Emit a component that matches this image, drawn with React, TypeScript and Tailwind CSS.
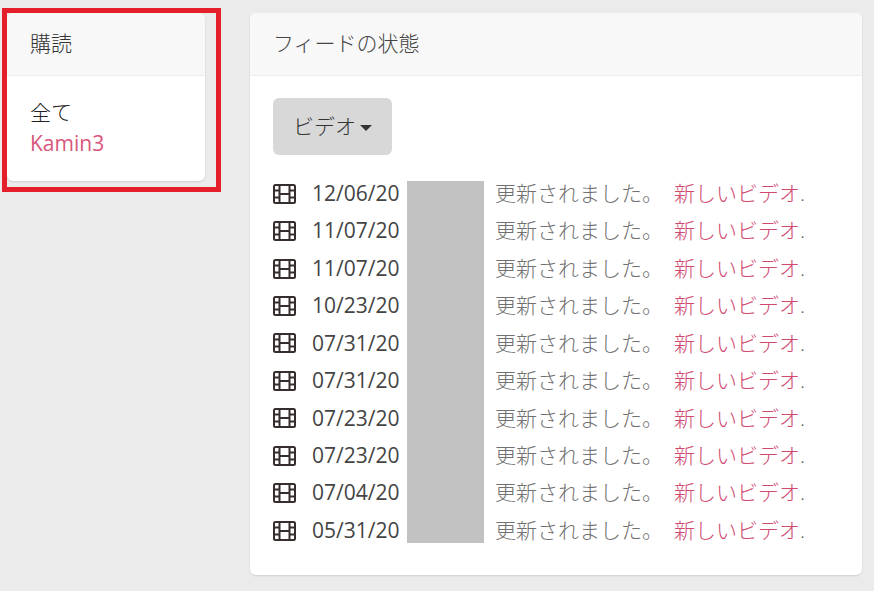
const rows = [
  "12/06/20",
  "11/07/20",
  "11/07/20",
  "10/23/20",
  "07/31/20",
  "07/31/20",
  "07/23/20",
  "07/23/20",
  "07/04/20",
  "05/31/20",
];

function FilmIcon() {
  return (
    <svg viewBox="0 0 23 20" className="w-[23px] h-[20px] shrink-0 translate-y-[1px]" fill="none" stroke="#352e2c" strokeWidth="2">
      <rect x="1" y="1" width="21" height="18" rx="1.5" />
      <path d="M6.5 1v18M16.5 1v18M6.5 10h10M1 6.5h5M1 13.5h5M17 6.5h5M17 13.5h5" />
    </svg>
  );
}

export default function App() {
  return (
    <div className="relative w-[874px] h-[591px] overflow-hidden bg-[#ebebeb] flex items-start gap-[45px] pl-[7px] pt-[13px] text-[21px] font-light text-[#222] font-['Open_Sans','Noto_Sans_CJK_JP',sans-serif]">
      <section className="w-[198px] h-[168px] bg-white rounded-md shadow-[0_1px_2px_rgba(0,0,0,0.12)]">
        <h2 className="h-[63px] px-[23px] flex items-center bg-[#f8f8f8] border-b border-[#eeeeee] rounded-t-md font-light text-[#333]">
          購読
        </h2>
        <div className="pt-[21px] px-[23px] leading-[31px]">
          <div>全て</div>
          <a className="font-normal text-[#d9567c]">Kamin3</a>
        </div>
      </section>

      <section className="w-[612px] h-[562px] bg-white rounded-md shadow-[0_1px_2px_rgba(0,0,0,0.12)]">
        <h2 className="h-[63px] px-[23px] flex items-center bg-[#f8f8f8] border-b border-[#eeeeee] rounded-t-md font-light text-[#444]">
          フィードの状態
        </h2>
        <div className="px-[23px] pt-[22px]">
          <button className="w-[119px] h-[57px] rounded-md bg-[#d8d8d8] flex items-center justify-center gap-[4px] text-[#333]">
            ビデオ
            <span className="w-0 h-0 mt-[3px] border-x-[6px] border-x-transparent border-t-[6px] border-t-[#333]" />
          </button>
          <div className="relative mt-[19px]">
            {rows.map((date, i) => (
              <div key={i} className="h-[37.44px] flex items-center">
                <FilmIcon />
                <span className="ml-[16px] w-[95px] shrink-0 font-normal text-[#444] translate-y-[1px]">{date}</span>
                <span className="ml-[88px] text-[#707070] translate-y-[1px]">更新されました。</span>
                <span className="ml-[11px] text-[#d04a70] translate-y-[1px]">新しいビデオ<span className="text-[#555]">.</span></span>
              </div>
            ))}
            <div className="absolute left-[134px] top-[7px] w-[77px] h-[362px] bg-[#c2c2c2]" />
          </div>
        </div>
      </section>

      <div className="absolute left-[2px] top-[8px] w-[219px] h-[184px] border-[5px] border-[#e21f2a]" />
    </div>
  );
}
